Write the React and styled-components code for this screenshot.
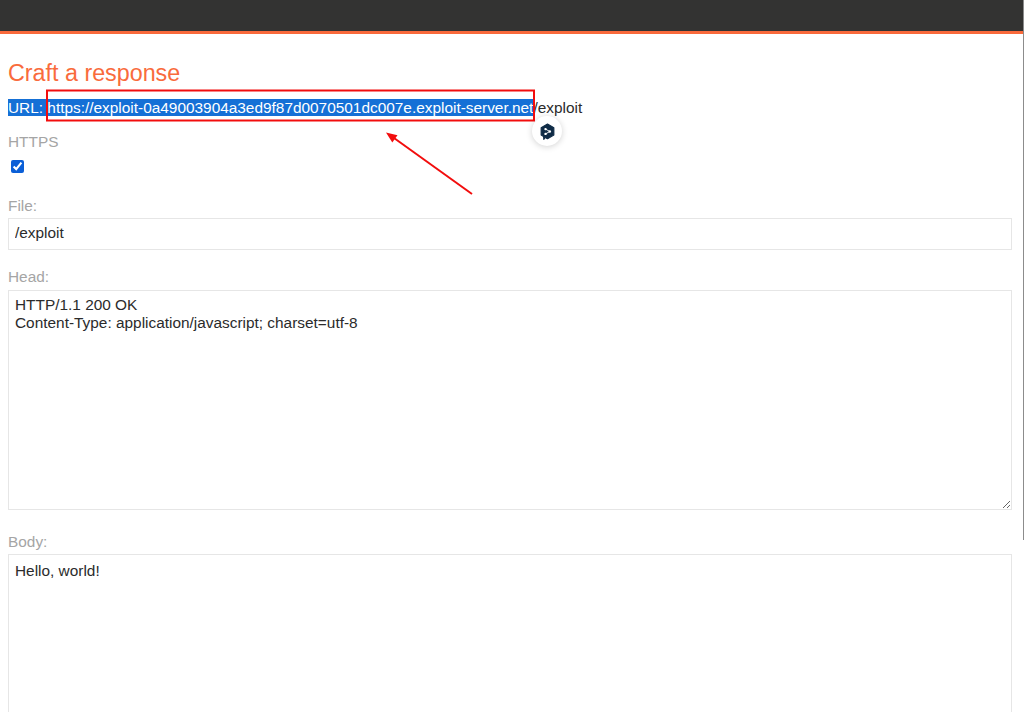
import React from "react";
import styled, { createGlobalStyle } from "styled-components";

const Global = createGlobalStyle`
  html, body { margin: 0; padding: 0; background: #fff; overflow: hidden; }
  body { font-family: "Liberation Sans", Arial, sans-serif; color: #333; }
`;

const Page = styled.div`
  position: relative;
  width: 1024px;
  height: 712px;
  overflow: hidden;
`;

const TopBar = styled.header`
  height: 31px;
  background: #333332;
  border-bottom: 3px solid #f96a3b;
`;

const Main = styled.main`
  padding: 0 12px 0 8px;
`;

const Title = styled.h2`
  margin: 25.5px 0 0;
  font-size: 23.3px;
  line-height: 27px;
  font-weight: normal;
  color: #f96b3c;
`;

const UrlLine = styled.div`
  margin-top: 12.5px;
  font-size: 15.4px;
  line-height: 17px;
  color: #2b2b2b;
  white-space: nowrap;
`;

const Selected = styled.span`
  background: #1570d6;
  color: #fff;
`;

const Label = styled.label`
  display: block;
  margin-top: ${(p) => p.$gap}px;
  font-size: 15.4px;
  line-height: 17px;
  color: #a5a5a5;
`;

const Check = styled.input`
  display: block;
  width: 13px;
  height: 13px;
  margin: 10.5px 0 0 3px;
  accent-color: #0b5fd7;
`;

const TextField = styled.input`
  display: block;
  box-sizing: border-box;
  width: 100%;
  height: 32px;
  margin-top: 4.5px;
  padding: 5px 6px 8px;
  border: 1px solid #e6e6e6;
  border-radius: 0;
  outline: none;
  font-family: "Liberation Sans", Arial, sans-serif;
  font-size: 15.4px;
  line-height: 17px;
  color: #2b2b2b;
  background: #fff;
`;

const Area = styled.textarea`
  display: block;
  box-sizing: border-box;
  width: 100%;
  height: 220px;
  margin-top: ${(p) => p.$gap}px;
  padding: ${(p) => p.$padTop}px 6px 6px;
  border: 1px solid #e6e6e6;
  border-radius: 0;
  outline: none;
  resize: both;
  font-family: "Liberation Sans", Arial, sans-serif;
  font-size: 15.4px;
  line-height: 17.7px;
  color: #2b2b2b;
  background: #fff;
`;

const Overlay = styled.svg`
  position: absolute;
  left: 0;
  top: 0;
  pointer-events: none;
`;

const FloatButton = styled.div`
  position: absolute;
  left: 532px;
  top: 116px;
  width: 30px;
  height: 30px;
  border-radius: 50%;
  background: #fff;
  box-shadow: 0 1px 6px rgba(0, 0, 0, 0.18);
  display: flex;
  align-items: center;
  justify-content: center;
`;

const EdgeLine = styled.div`
  position: absolute;
  left: 1023px;
  top: 0;
  width: 1px;
  height: 540px;
  background: #8c8c8c;
`;

function DeepLIcon() {
  return (
    <svg width="17" height="17" viewBox="0 0 24 24">
      <path
        d="M12 1.5 L21 6.7 V17.1 L12 22.3 L8.6 20.4 L6.8 23.2 L6.4 19.1 L3 17.1 V6.7 Z"
        fill="#0f2b46"
        stroke="#0f2b46"
        strokeWidth="1.5"
        strokeLinejoin="round"
      />
      <g stroke="#fff" strokeWidth="1.3">
        <line x1="9.2" y1="8.6" x2="15.3" y2="12" />
        <line x1="9.2" y1="15.4" x2="15.3" y2="12" />
      </g>
      <g fill="#fff">
        <circle cx="9.2" cy="8.6" r="1.7" />
        <circle cx="9.2" cy="15.4" r="1.7" />
        <circle cx="15.3" cy="12" r="1.7" />
      </g>
    </svg>
  );
}

export default function App() {
  return (
    <Page>
      <Global />
      <TopBar />
      <Main>
        <Title>Craft a response</Title>
        <UrlLine>
          <Selected>URL: https://exploit-0a49003904a3ed9f87d0070501dc007e.exploit-server.net</Selected>
          /exploit
        </UrlLine>
        <Label $gap={16.5}>HTTPS</Label>
        <Check type="checkbox" defaultChecked />
        <Label $gap={23.5}>File:</Label>
        <TextField defaultValue="/exploit" />
        <Label $gap={17.5}>Head:</Label>
        <Area
          $gap={5.5}
          $padTop={5}
          defaultValue={"HTTP/1.1 200 OK\nContent-Type: application/javascript; charset=utf-8"}
        />
        <Label $gap={22.5}>Body:</Label>
        <Area $gap={4.5} $padTop={7} defaultValue={"Hello, world!"} />
      </Main>

      <Overlay width="1024" height="712" viewBox="0 0 1024 712">
        <rect x="47" y="90.5" width="487" height="30" fill="none" stroke="#f20d0d" strokeWidth="2" />
        <line x1="472" y1="194" x2="394" y2="138" stroke="#f20d0d" strokeWidth="2" />
        <polygon points="386,132.5 397.5,135.2 392.3,142.6" fill="#f20d0d" />
      </Overlay>
      <FloatButton>
        <DeepLIcon />
      </FloatButton>
      <EdgeLine />
    </Page>
  );
}
